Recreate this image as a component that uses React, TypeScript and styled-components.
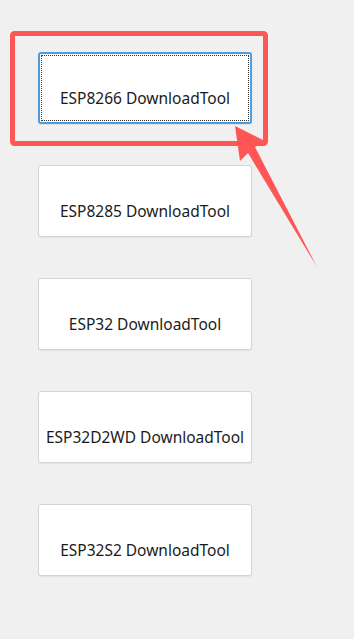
import React from "react";
import styled, { createGlobalStyle, css } from "styled-components";

const TOOLS = [
  "ESP8266 DownloadTool",
  "ESP8285 DownloadTool",
  "ESP32 DownloadTool",
  "ESP32D2WD DownloadTool",
  "ESP32S2 DownloadTool",
];

const GlobalStyle = createGlobalStyle`
  html, body {
    margin: 0;
    padding: 0;
    background: #f0f0f0;
  }
  body {
    font-family: "Noto Sans", "Open Sans", sans-serif;
  }
`;

const Window = styled.div`
  position: relative;
  width: 354px;
  height: 639px;
  background: #f0f0f0;
  overflow: hidden;
`;

const ButtonList = styled.div`
  display: flex;
  flex-direction: column;
  gap: 41px;
  padding: 52px 0 0 38px;
`;

const ToolButton = styled.button<{ $focused?: boolean }>`
  box-sizing: border-box;
  width: 214px;
  height: 72px;
  margin: 0;
  padding: 20px 0 0;
  background: #ffffff;
  border: 1px solid #d4d4d4;
  border-radius: 3px;
  box-shadow: 0 1px 1px rgba(0, 0, 0, 0.06);
  font-family: "Noto Sans", "Open Sans", sans-serif;
  font-size: 15.5px;
  color: #1b1b1b;
  letter-spacing: 0;
  white-space: nowrap;
  position: relative;
  ${({ $focused }) =>
    $focused &&
    css`
      border: 2px solid #4a9de0;
      &::after {
        content: "";
        position: absolute;
        inset: 1px;
        border: 1px dotted #333;
        border-radius: 1px;
      }
    `}
`;

const Annotation = styled.svg`
  position: absolute;
  left: 0;
  top: 0;
  pointer-events: none;
`;

export default function App() {
  return (
    <>
      <GlobalStyle />
      <Window>
        <ButtonList>
          {TOOLS.map((name, i) => (
            <ToolButton key={name} type="button" $focused={i === 0}>
              {name}
            </ToolButton>
          ))}
        </ButtonList>
        <Annotation width="354" height="639" viewBox="0 0 354 639">
          <rect
            x="12.5"
            y="33.5"
            width="253"
            height="110"
            rx="2"
            fill="none"
            stroke="#fe5555"
            strokeWidth="5"
          />
          <polygon
            points="235,126 265,141 255,147 317,267 248,153 240,161"
            fill="#fe5555"
          />
        </Annotation>
      </Window>
    </>
  );
}
